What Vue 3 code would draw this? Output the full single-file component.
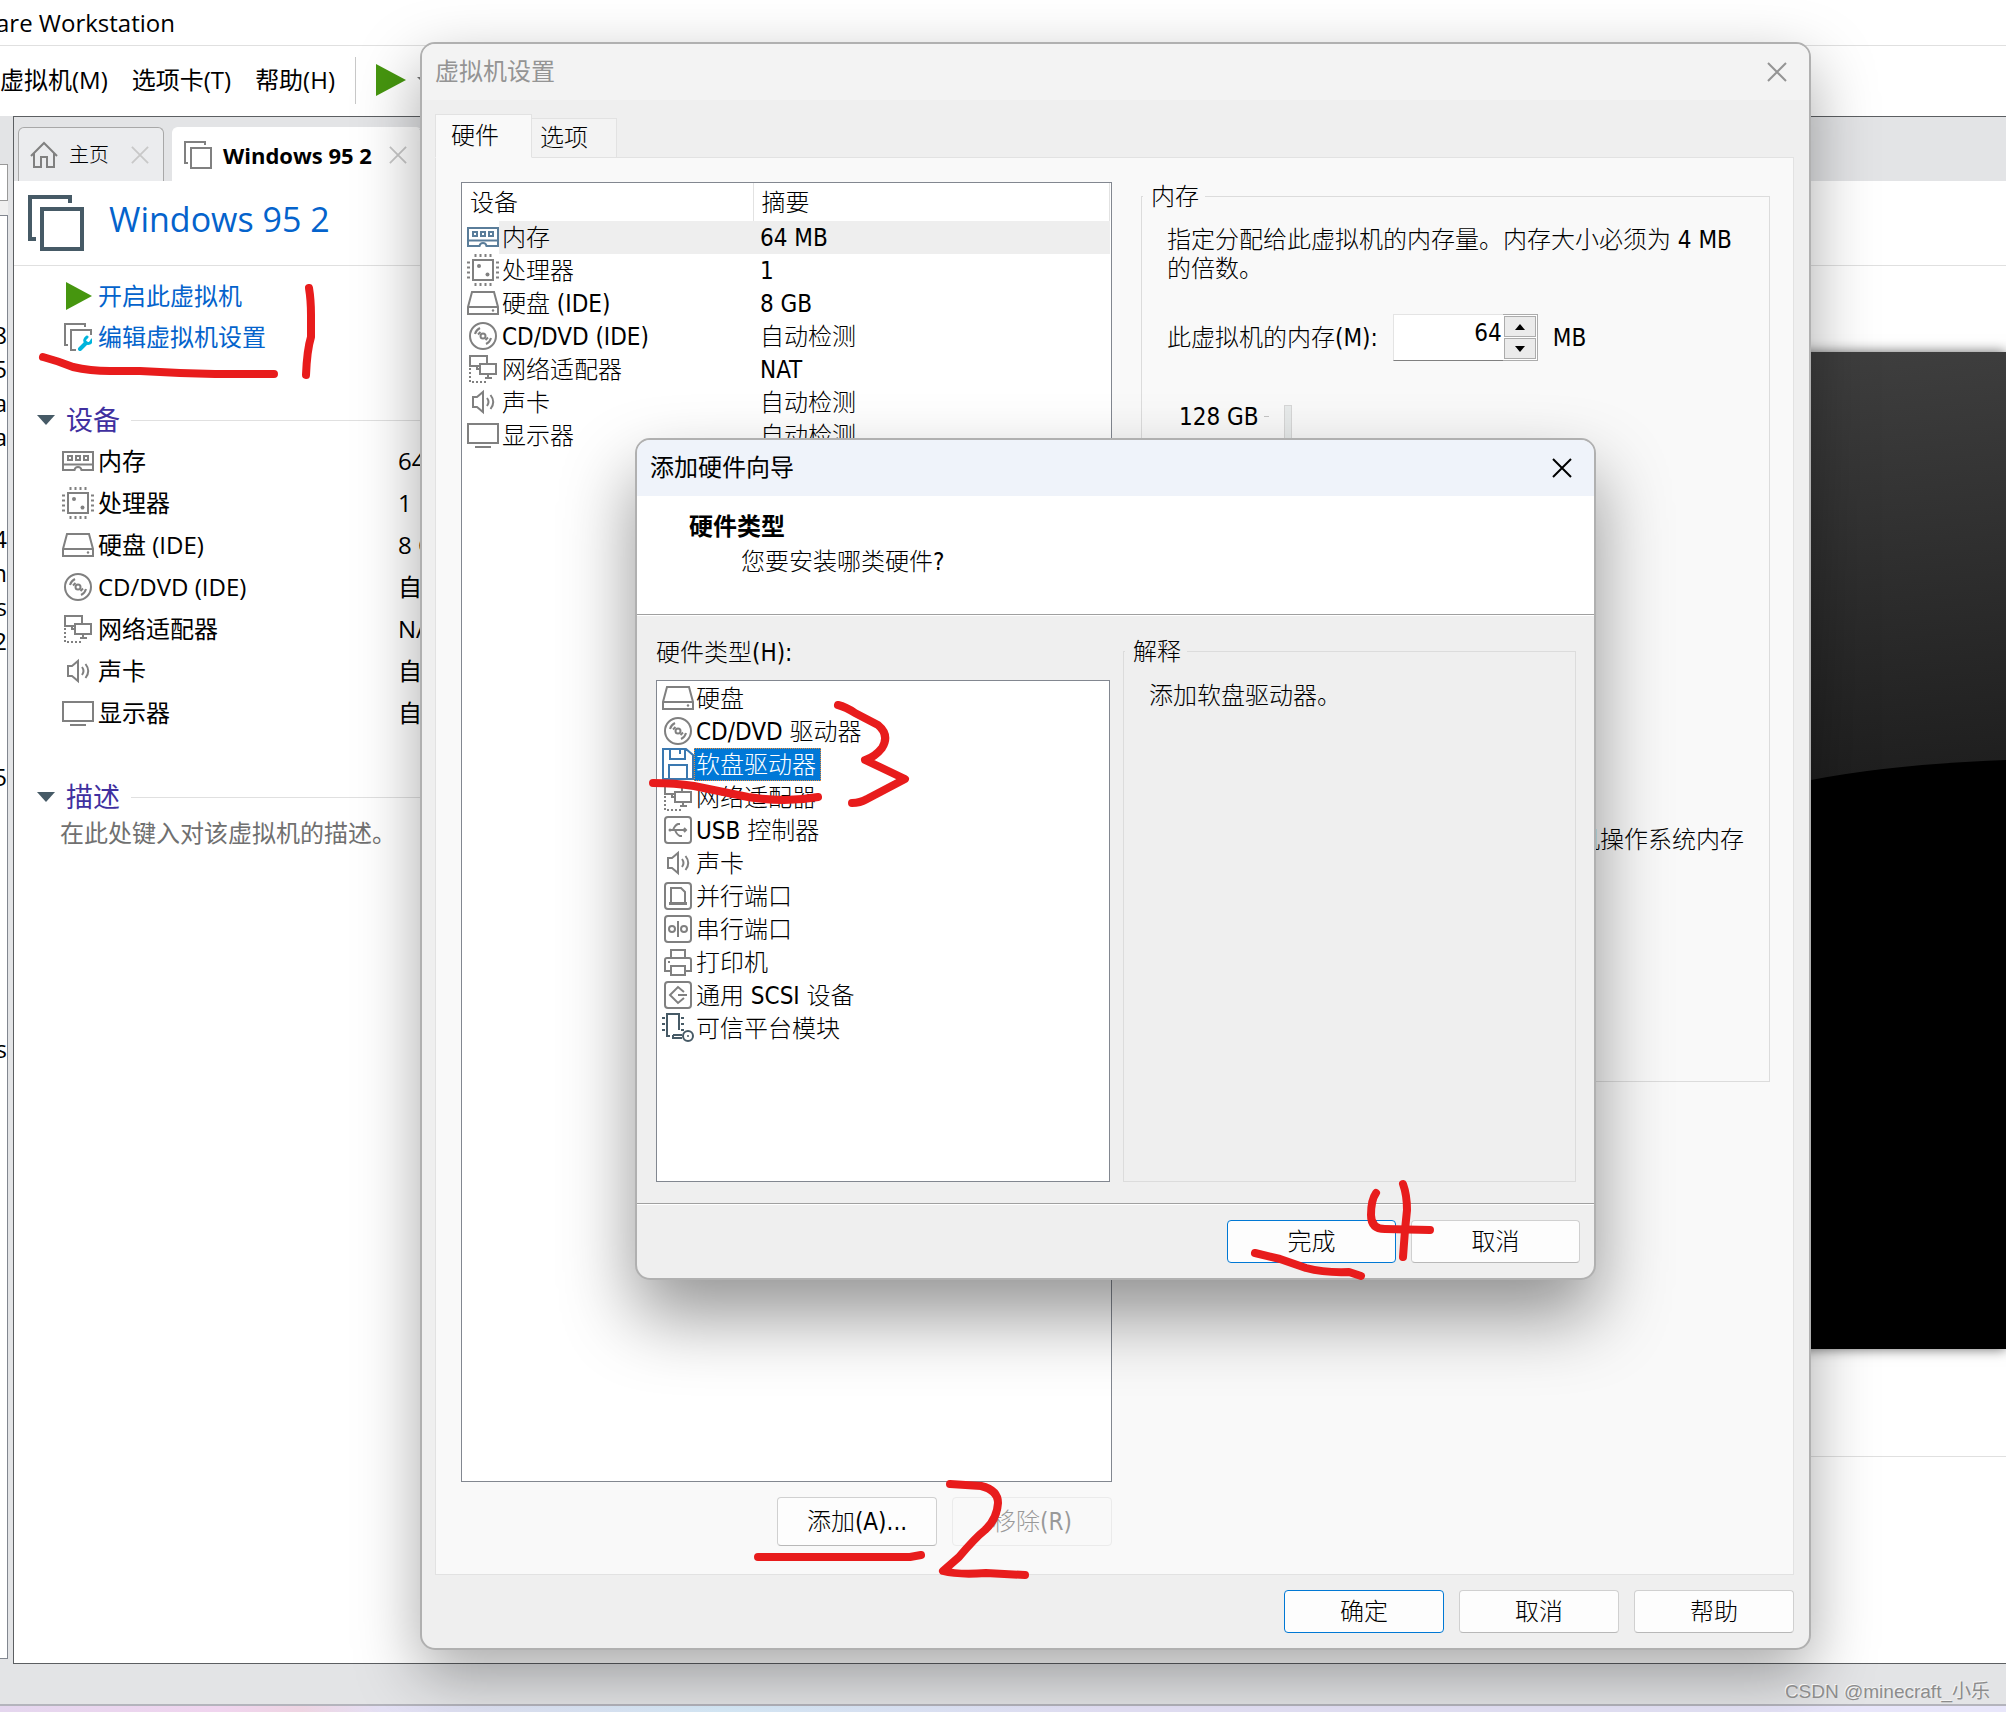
<script setup>
import { ref } from 'vue'

const memory = ref('64')
const selectedType = ref('floppy')

const devices = [
  { icon: 'mem', name: '内存', value: '64 MB' },
  { icon: 'cpu', name: '处理器', value: '1' },
  { icon: 'hdd', name: '硬盘 (IDE)', value: '8 GB' },
  { icon: 'cd', name: 'CD/DVD (IDE)', value: '自动检测' },
  { icon: 'net', name: '网络适配器', value: 'NAT' },
  { icon: 'sound', name: '声卡', value: '自动检测' },
  { icon: 'display', name: '显示器', value: '自动检测' }
]

const hardwareTypes = [
  { icon: 'hdd', name: '硬盘' },
  { icon: 'cd', name: 'CD/DVD 驱动器' },
  { icon: 'floppy', name: '软盘驱动器' },
  { icon: 'net', name: '网络适配器' },
  { icon: 'usb', name: 'USB 控制器' },
  { icon: 'sound', name: '声卡' },
  { icon: 'parallel', name: '并行端口' },
  { icon: 'serial', name: '串行端口' },
  { icon: 'printer', name: '打印机' },
  { icon: 'scsi', name: '通用 SCSI 设备' },
  { icon: 'tpm', name: '可信平台模块' }
]

const library = ['8', '5', 'a', 'a', '', '', '4', 'n', 'es', '2', '', '', '', '5', '', '', '', '', '', '', '', 'es']

const marks = [
  'M43 357Q58 361 73 367Q90 371 110 371H140L180 373L215 374H274',
  'M309 288Q311 300 311 315V337Q307 350 306 375',
  'M758 1557H910L921 1555',
  'M950 1484L981 1486Q998 1490 998 1503Q997 1519 985 1530Q975 1538 959 1557L943 1571Q958 1575 986 1573L1025 1575',
  'M653 783Q675 783 694 786L748 797Q785 803 818 797',
  'M838 705Q846 707 855 713L878 725Q890 735 882 748Q875 757 865 760L905 779L867 799Q860 803 852 803',
  'M1255 1253L1280 1259L1306 1268Q1325 1273 1349 1272L1361 1276',
  'M1376 1193Q1371 1200 1371 1215Q1371 1229 1385 1229L1430 1230',
  'M1403 1184Q1407 1195 1407 1210L1405 1230L1403 1257'
]
</script>

<template>
  <div class="desktop">
    <svg class="sprite" aria-hidden="true">
      <symbol id="i-mem" viewBox="0 0 32 32"><path d="M1 7H31V25H19.500Q19 22 16 22T12.500 25H1ZM1 19.500H31" /><path d="M6 11h4v4H6zM14 11h4v4h-4zM22 11h4v4h-4z" /></symbol>
      <symbol id="i-cpu" viewBox="0 0 32 32"><rect x="6" y="6" width="20" height="20" /><path d="M8.500 0v3M13.500 0v3M18.500 0v3M23.500 0v3M8.500 29v3M13.500 29v3M18.500 29v3M23.500 29v3M0 8.500h3M0 13.500h3M0 18.500h3M0 23.500h3M29 8.500h3M29 13.500h3M29 18.500h3M29 23.500h3" /><circle class="fill" cx="12" cy="12" r="2" /><circle class="fill" cx="20.500" cy="20.500" r="2" /></symbol>
      <symbol id="i-hdd" viewBox="0 0 32 32"><path d="M5 5H27L31 20V27H1V20ZM1 20H31" /><circle class="fill" cx="26" cy="23.500" r="1.200" /></symbol>
      <symbol id="i-cd" viewBox="0 0 32 32"><circle cx="16" cy="16" r="13" /><circle cx="16" cy="16" r="2.500" /><path d="M8 14Q9 10 13 8M11 14.500L13.500 12M24 18Q23 22 19 24M21 17.500L18.500 20" /></symbol>
      <symbol id="i-net" viewBox="0 0 32 32"><path d="M13 13H3V3H20V11M13 11H29V21H13ZM21 21V25M18 25H25M10 13V16H13" /><path d="M3 15V29H21" stroke-dasharray="2 2" /></symbol>
      <symbol id="i-sound" viewBox="0 0 32 32"><path d="M6 11V21H10L16 26V6L10 11ZM20 12Q23 16 20 20M23.500 9Q29 16 23.500 23" /></symbol>
      <symbol id="i-display" viewBox="0 0 32 32"><path d="M1 5H31V24H1ZM8 28H24" /></symbol>
      <symbol id="i-floppy" viewBox="0 0 32 32"><path d="M1 1H24L31 7V31H1ZM8 1V11H23V1M18 1V6M7 31V17H25V31" /></symbol>
      <symbol id="i-usb" viewBox="0 0 32 32"><rect x="3" y="3" width="26" height="26" rx="3" /><path d="M8 16H24M22 14L24 16L22 18M11 16Q13 11 16 10H18M13 16Q15 21 18 22H20" /><circle class="fill" cx="8" cy="16" r="1.500" /></symbol>
      <symbol id="i-parallel" viewBox="0 0 32 32"><rect x="3" y="3" width="26" height="26" rx="3" /><path d="M9 23V8H19L23 12V23" /><path class="fill" d="M7 22H25V25H7Z" /></symbol>
      <symbol id="i-serial" viewBox="0 0 32 32"><rect x="3" y="3" width="26" height="26" rx="3" /><circle cx="10" cy="16" r="3" /><circle cx="22" cy="16" r="3" /><path d="M16 8V24" /></symbol>
      <symbol id="i-printer" viewBox="0 0 32 32"><path d="M9 12V4H23V12M9 25H3V14Q3 12 5 12H27Q29 12 29 14V25H23M9 20H23V29H9ZM6 16H8" /></symbol>
      <symbol id="i-scsi" viewBox="0 0 32 32"><rect x="3" y="3" width="26" height="26" rx="3" /><path d="M22 13L16 8L8 16L16 24L22 19M16 16H25" /></symbol>
      <symbol id="i-tpm" viewBox="0 0 32 32"><path d="M8 24H5V2H17V18M0 6H3M0 12H3M0 18H3M19 6H22M19 12H22M19 18H22M11 23H20M11 23V26H20" /><circle cx="26" cy="24" r="5" /><circle class="fill" cx="26" cy="24" r="1" /></symbol>
      <symbol id="i-home" viewBox="0 0 28 28"><path d="M1 15L14 2L27 15M4 12V26H11V16H17V26H24V12" /></symbol>
      <symbol id="i-vm" viewBox="0 0 28 28"><path d="M4 22H1V1H21V4M7 7H27V27H7Z" /></symbol>
      <symbol id="i-edit" viewBox="0 0 28 28"><path d="M4 22H1V1H21V4M12 27H7V7H27V12" /><path class="wrench" d="M16 26L22 20" /><path class="wrench thin" d="M23 14Q19 17 22 20Q26 22 28 17" /></symbol>
      <symbol id="i-close" viewBox="0 0 20 20"><path d="M1 1L19 19M19 1L1 19" /></symbol>
    </svg>

    <header class="titlebar">are Workstation</header>

    <nav class="menubar">
      <button type="button">虚拟机(M)</button>
      <button type="button">选项卡(T)</button>
      <button type="button">帮助(H)</button>
      <span class="divider"></span>
      <button type="button" class="power" aria-label="开机">
        <svg width="30" height="32" viewBox="0 0 30 32"><path d="M0 0L30 16L0 32Z" fill="#46960f" /></svg>
        <svg width="12" height="6" viewBox="0 0 12 6"><path d="M0 0H12L6 6Z" fill="#777" /></svg>
      </button>
    </nav>

    <div class="workspace">
      <aside class="library">
        <div class="search"></div>
        <ul class="tree">
          <li v-for="(item, i) in library" :key="i">{{ item }}</li>
        </ul>
      </aside>

      <main class="main">
        <div class="tabstrip">
          <div class="tab home">
            <svg class="ico28"><use href="#i-home" /></svg>
            <span>主页</span>
            <svg class="tabclose"><use href="#i-close" /></svg>
          </div>
          <div class="tab active">
            <svg class="ico28"><use href="#i-vm" /></svg>
            <b>Windows 95 2</b>
            <svg class="tabclose"><use href="#i-close" /></svg>
          </div>
        </div>

        <div class="vmhead">
          <svg class="ico56"><use href="#i-vm" /></svg>
          <h1>Windows 95 2</h1>
        </div>

        <div class="vmbody">
          <div class="details">
            <div class="actions">
              <a href="#"><svg class="play" viewBox="0 0 26 28"><path d="M0 0L26 14L0 28Z" /></svg>开启此虚拟机</a>
              <a href="#"><svg class="ico28"><use href="#i-edit" /></svg>编辑虚拟机设置</a>
            </div>
            <h2><svg viewBox="0 0 18 10"><path d="M0 0H18L9 10Z" /></svg>设备</h2>
            <dl>
              <div v-for="d in devices" :key="d.icon">
                <dt><svg class="ico"><use :href="'#i-' + d.icon" /></svg>{{ d.name }}</dt>
                <dd>{{ d.value }}</dd>
              </div>
            </dl>
            <h2><svg viewBox="0 0 18 10"><path d="M0 0H18L9 10Z" /></svg>描述</h2>
            <p class="note">在此处键入对该虚拟机的描述。</p>
          </div>
          <div class="preview">
            <svg class="console" viewBox="0 0 1392 997" preserveAspectRatio="none">
              <defs>
                <linearGradient id="glare" gradientUnits="userSpaceOnUse" x1="1290" y1="0" x2="1330" y2="428"><stop offset="0" stop-color="#3e3e3e" /><stop offset="1" stop-color="#1e1e1e" /></linearGradient>
              </defs>
              <rect width="1392" height="997" fill="#000" />
              <path d="M0 0H1392V408Q1280 412 1197 428L0 700Z" fill="url(#glare)" />
            </svg>
          </div>
        </div>
      </main>
    </div>

    <footer class="statusbar"></footer>
    <div class="wallpaper"></div>

    <section class="window settings" role="dialog" aria-labelledby="settings-title">
      <div class="caption">
        <span id="settings-title">虚拟机设置</span>
        <button type="button" class="close" aria-label="关闭"><svg><use href="#i-close" /></svg></button>
      </div>
      <div class="tabs" role="tablist">
        <button type="button" role="tab" aria-selected="true" class="current">硬件</button>
        <button type="button" role="tab" aria-selected="false">选项</button>
      </div>
      <div class="page">
        <div class="hardware">
          <div class="listbox">
            <table>
              <thead>
                <tr><th>设备</th><th>摘要</th></tr>
              </thead>
              <tbody>
                <tr v-for="(d, i) in devices" :key="d.icon" :class="{ chosen: i === 0 }">
                  <td><div class="cell"><svg class="ico"><use :href="'#i-' + d.icon" /></svg><span>{{ d.name }}</span></div></td>
                  <td>{{ d.value }}</td>
                </tr>
              </tbody>
            </table>
          </div>
          <div class="listbuttons">
            <button type="button" class="btn">添加(A)...</button>
            <button type="button" class="btn" disabled>移除(R)</button>
          </div>
        </div>
        <fieldset class="memory">
          <legend>内存</legend>
          <p>指定分配给此虚拟机的内存量。内存大小必须为 4 MB 的倍数。</p>
          <div class="amount">
            <label for="mem">此虚拟机的内存(M):</label>
            <div class="spin">
              <input id="mem" v-model="memory" type="text">
              <div class="arrows">
                <button type="button" aria-label="增加"><svg viewBox="0 0 10 6"><path d="M0 6H10L5 0Z" /></svg></button>
                <button type="button" aria-label="减少"><svg viewBox="0 0 10 6"><path d="M0 0H10L5 6Z" /></svg></button>
              </div>
            </div>
            <span>MB</span>
          </div>
          <div class="scale">
            <span>128 GB</span><i class="tick"></i><i class="track"></i>
          </div>
          <p class="hint">机操作系统内存</p>
        </fieldset>
      </div>
      <div class="buttons">
        <button type="button" class="btn primary">确定</button>
        <button type="button" class="btn">取消</button>
        <button type="button" class="btn">帮助</button>
      </div>
    </section>

    <section class="window wizard" role="dialog" aria-labelledby="wizard-title">
      <div class="caption">
        <span id="wizard-title">添加硬件向导</span>
        <button type="button" class="close" aria-label="关闭"><svg><use href="#i-close" /></svg></button>
      </div>
      <div class="intro">
        <h3>硬件类型</h3>
        <p>您要安装哪类硬件?</p>
      </div>
      <div class="choose">
        <div class="types">
          <div id="types-label" class="label">硬件类型(H):</div>
          <ul role="listbox" aria-labelledby="types-label">
            <li
              v-for="t in hardwareTypes"
              :key="t.icon"
              role="option"
              :aria-selected="t.icon === selectedType"
              :class="[t.icon, { picked: t.icon === selectedType }]"
              @click="selectedType = t.icon"
            >
              <svg class="ico"><use :href="'#i-' + t.icon" /></svg><span>{{ t.name }}</span>
            </li>
          </ul>
        </div>
        <fieldset class="explain">
          <legend>解释</legend>
          <p>添加软盘驱动器。</p>
        </fieldset>
      </div>
      <div class="buttons">
        <button type="button" class="btn primary">完成</button>
        <button type="button" class="btn">取消</button>
      </div>
    </section>

    <svg class="ink" aria-hidden="true">
      <path v-for="m in marks" :key="m" :d="m" />
    </svg>
    <div class="watermark">CSDN @minecraft_小乐</div>
  </div>
</template>

<style>
body {
  margin: 0;
}
</style>

<style scoped>
.desktop {
  position: relative;
  display: flex;
  flex-direction: column;
  min-height: 100vh;
  overflow: hidden;
  background: #fff;
  color: #000;
  font-family: "Open Sans", "Noto Sans CJK SC", sans-serif;
  font-size: 24px;
  line-height: 32px;
}
.desktop *,
.desktop *::before,
.desktop *::after {
  box-sizing: border-box;
}
button,
input {
  font: inherit;
  color: inherit;
  padding: 0;
  margin: 0;
  border: 0;
  background: none;
}
ul,
dl,
dd,
p,
h1,
h2,
h3 {
  margin: 0;
  padding: 0;
  list-style: none;
}
svg {
  display: block;
  flex: none;
}
.sprite {
  position: absolute;
  width: 0;
  height: 0;
}
symbol path,
symbol rect,
symbol circle {
  fill: none;
  stroke: currentColor;
  stroke-width: 2px;
}
symbol .fill {
  fill: currentColor;
  stroke: none;
}
symbol .wrench {
  stroke: #00b4dc;
  stroke-width: 4px;
  stroke-linecap: round;
}
symbol .thin {
  stroke-width: 3px;
}
.ico {
  width: 32px;
  height: 32px;
  color: #808080;
}
.ico28 {
  width: 28px;
  height: 28px;
  color: #808080;
}

/* application frame */
.titlebar {
  height: 46px;
  padding-top: 7px;
  border-bottom: 1px solid #e0e0e0;
  white-space: nowrap;
  text-indent: -4px;
}
.menubar {
  display: flex;
  align-items: center;
  gap: 24px;
  height: 70px;
  padding-bottom: 2px;
}
.menubar button {
  white-space: nowrap;
}
.menubar .divider {
  width: 1px;
  height: 47px;
  margin: 0 -4px 0 -4px;
  background: #c8c8c8;
}
.menubar .power {
  display: flex;
  align-items: center;
  gap: 11px;
}
.workspace {
  display: flex;
  flex: 1;
  background: #e3e4e6;
}
.library {
  display: flex;
  flex-direction: column;
  width: 8px;
  margin: 48px 5px 5px 0;
  background: #f0f0f0;
}
.search {
  height: 37px;
  margin-bottom: 14px;
  border: solid #999;
  border-width: 1px 1px 1px 0;
  background: #fff;
}
.tree {
  flex: 1;
  padding-top: 103px;
  border: solid #828790;
  border-width: 1px 1px 1px 0;
  background: #fff;
}
.tree li {
  display: flex;
  justify-content: flex-end;
  height: 34px;
  overflow: hidden;
}
.main {
  display: flex;
  flex: 1;
  flex-direction: column;
  min-width: 0;
  border: solid #5c5f62;
  border-width: 1px 0 1px 1px;
  background: #fff;
}
.tabstrip {
  display: flex;
  gap: 8px;
  height: 64px;
  padding: 10px 4px 0;
  background: #e3e4e6;
}
.tab {
  display: flex;
  align-items: center;
  border: solid #a8a8a8;
  border-width: 1px 1px 0;
  border-radius: 6px 6px 0 0;
}
.tab.home {
  width: 146px;
  padding: 0 14px 0 11px;
  background: #ebecee;
  font-size: 20px;
  font-weight: 300;
}
.tab.home span {
  margin-left: 11px;
}
.tab.active {
  width: 250px;
  padding: 0 14px 0 11px;
  border-color: #fff #a8a8a8 #fff #fff;
  background: #fff;
  font-size: 22px;
}
.tab.active b {
  margin-left: 11px;
  white-space: nowrap;
}
.tabclose {
  width: 18px;
  height: 18px;
  margin-left: auto;
  color: #c8c8c8;
}
.tabclose use {
  stroke-width: 3px;
}
.vmhead {
  display: flex;
  align-items: center;
  gap: 25px;
  height: 85px;
  padding: 0 14px;
  border-bottom: 1px solid #e0e0e0;
}
.ico56 {
  width: 56px;
  height: 56px;
  color: #465a66;
}
.vmhead h1 {
  padding-bottom: 8px;
  color: #0463cc;
  font-size: 34px;
  font-weight: 400;
  line-height: 48px;
}
.vmbody {
  display: flex;
  flex: 1;
}
.details {
  width: 600px;
  padding: 10px 0 0 23px;
}
.actions {
  display: flex;
  flex-direction: column;
  gap: 1px;
  padding: 0 0 43px 27px;
}
.actions a {
  display: flex;
  align-items: center;
  gap: 6px;
  height: 40px;
  color: #0463cc;
  text-decoration: none;
}
.play {
  width: 26px;
  height: 28px;
  margin-left: 2px;
  fill: #46960f;
}
.details h2 {
  display: flex;
  align-items: center;
  gap: 11px;
  color: #4030a0;
  font-size: 27px;
  font-weight: 400;
  line-height: 40px;
}
.details h2 svg {
  width: 18px;
  height: 10px;
  fill: #465a66;
}
.details h2::after {
  content: "";
  flex: 1;
  height: 1px;
  background: #e0e0e0;
}
dl {
  padding: 0 0 43px 25px;
}
dl > div {
  display: flex;
  height: 42px;
  align-items: center;
}
dt {
  display: flex;
  align-items: center;
  gap: 4px;
  width: 336px;
}
.note {
  padding-left: 23px;
  color: #707070;
}
.preview {
  flex: 1;
  padding-top: 86px;
}
.console {
  width: 100%;
  height: 997px;
  box-shadow: 0 0 12px rgba(0, 0, 0, 0.6);
}
.preview::after {
  content: "";
  display: block;
  height: 1px;
  margin-top: 107px;
  background: #e0e0e0;
}
.statusbar {
  height: 40px;
  background: #e3e4e6;
}
.wallpaper {
  height: 8px;
  border-top: 2px solid #b4b4bc;
  background: linear-gradient(90deg, #e4d6ee, #f0d4ee 11%, #eed4e2 15%, #e4e0f4 19%, #daeefc 36%, #e8e4fa 55%, #e8e6fa);
}

/* dialog windows */
.window {
  position: absolute;
  display: flex;
  flex-direction: column;
  overflow: hidden;
  border: 2px solid #b0b0b0;
  border-radius: 15px;
  background: #efefef;
  font-family: "DejaVu Sans Condensed", "Noto Sans CJK SC", sans-serif;
  font-weight: 300;
}
.settings {
  top: 42px;
  left: 420px;
  width: 1391px;
  box-shadow: 0 24px 64px rgba(0, 0, 0, 0.34);
}
.wizard {
  top: 438px;
  left: 635px;
  width: 961px;
  box-shadow: 0 36px 72px rgba(0, 0, 0, 0.42);
}
.caption {
  display: flex;
  align-items: center;
  justify-content: space-between;
  height: 56px;
  padding: 0 22px 1px 13px;
  background: #f3f3f3;
  color: #949494;
  font-weight: 400;
}
.wizard .caption {
  background: #eff3fa;
  color: #000;
}
.close svg {
  width: 20px;
  height: 20px;
}
.tabs {
  display: flex;
  align-items: flex-end;
  height: 58px;
  margin-bottom: -1px;
  padding-left: 13px;
}
.tabs button {
  width: 85px;
  height: 40px;
  padding: 0 10px 0 8px;
  border: 1px solid #e2e2e2;
  border-left: 0;
  background: #f3f3f3;
  text-align: left;
}
.tabs .current {
  z-index: 1;
  width: 97px;
  height: 44px;
  padding-left: 15px;
  border-left: 1px solid #e2e2e2;
  border-bottom-color: #f9f9f9;
  background: #f9f9f9;
}
.page {
  display: flex;
  gap: 29px;
  margin: 0 15px 0 13px;
  padding: 24px 23px 28px 25px;
  border: 1px solid #e2e2e2;
  background: #f9f9f9;
}
.hardware {
  width: 651px;
}
.listbox {
  height: 1300px;
  padding-right: 1px;
  border: 1px solid #828790;
  background: #fff;
}
table {
  width: 100%;
  border-collapse: collapse;
  table-layout: fixed;
}
th {
  height: 38px;
  padding: 1px 0 0 8px;
  border-right: 1px solid #e2e2e2;
  font-weight: inherit;
  text-align: left;
}
th:first-child {
  width: 291px;
}
td {
  height: 33px;
  padding: 1px 0 0 7px;
}
td:first-child {
  padding: 0;
}
.cell {
  display: flex;
  height: 33px;
  padding-left: 5px;
}
.cell span {
  flex: 1;
  padding-left: 3px;
  line-height: 34px;
}
.chosen td:last-child,
.chosen .cell span {
  background: #eee;
}
.chosen .ico {
  color: #5a7d9a;
}
.listbuttons {
  display: flex;
  justify-content: flex-end;
  gap: 15px;
  padding-top: 15px;
}
.btn {
  width: 160px;
  height: 43px;
  border: 1px solid #d0d0d0;
  border-bottom-color: #b8b8b8;
  border-radius: 4px;
  background: #fdfdfd;
}
.btn.primary {
  border-color: #0078d4;
}
.listbuttons .btn {
  height: 49px;
}
.btn:disabled {
  border-color: #ebebeb;
  background: #f9f9f9;
  color: #999;
}
.buttons {
  display: flex;
  justify-content: flex-end;
  gap: 15px;
  padding: 15px;
}
fieldset {
  min-width: 0;
  margin: 0;
  border: 1px solid #dcdcdc;
}
legend {
  height: 28px;
  margin-left: 1px;
  padding: 0 6px 0 8px;
  line-height: 30px;
}
.memory {
  flex: 1;
  align-self: flex-start;
  min-height: 900px;
  padding: 16px 25px 0 0;
}
.memory > p,
.memory > div {
  margin-left: 25px;
}
.memory > p {
  line-height: 29px;
}
.amount {
  display: flex;
  align-items: center;
  gap: 15px;
  padding-top: 30px;
}
.spin {
  display: flex;
  width: 145px;
  height: 47px;
  border: 1px solid #e4e4e4;
  border-bottom-color: #808080;
  background: #fff;
}
.spin input {
  width: 108px;
  height: 36px;
  text-align: right;
}
.arrows {
  display: flex;
  flex: 1;
  flex-direction: column;
  gap: 1px;
  margin: -1px -1px -1px 1px;
  padding: 1px;
  border: 1px solid #acacac;
  border-left: 0;
}
.arrows button {
  display: flex;
  flex: 1;
  align-items: center;
  justify-content: center;
  border: 1px solid #acacac;
  background: #ebebeb;
}
.arrows svg {
  width: 10px;
  height: 6px;
}
.scale {
  display: flex;
  height: 421px;
  margin-top: 44px;
  padding-left: 12px;
  line-height: 24px;
}
.tick {
  width: 5px;
  height: 1px;
  margin: 11px 15px 0 5px;
  background: #c4c4c4;
}
.track {
  width: 8px;
  border: 1px solid #d6d6d6;
  background: #e7eaea;
}
.hint {
  text-align: right;
}
.wizard .intro {
  height: 119px;
  padding: 15px 52px;
  border-bottom: 1px solid #a0a0a0;
  background: #fff;
}
.intro h3 {
  font-size: 24px;
  font-weight: 700;
}
.intro p {
  padding: 3px 0 0 52px;
}
.choose {
  display: flex;
  gap: 13px;
  padding: 21px 18px 21px 19px;
  border-top: 1px solid #fff;
}
.types {
  width: 454px;
}
.types .label {
  padding-bottom: 11px;
}
.types ul {
  height: 502px;
  padding: 1px 5px;
  border: 1px solid #828790;
  background: #fff;
}
.types li {
  display: flex;
  height: 33px;
}
.types li span {
  padding: 0 2px;
  line-height: 34px;
}
.types .floppy .ico {
  color: #3a78b0;
}
.types .tpm .ico {
  color: #465a66;
}
.types .picked span {
  padding-right: 5px;
  outline: 1px dotted #f08a30;
  outline-offset: -1px;
  background: #0078d7;
  color: #fff;
}
.explain {
  flex: 1;
  padding: 15px 25px 0 0;
}
.explain p {
  padding-left: 25px;
}
.wizard .buttons {
  padding: 16px 14px 15px;
  border-top: 1px solid #a0a0a0;
  box-shadow: inset 0 1px #fff;
}
.wizard .btn {
  width: 169px;
}

/* handwritten step marks above the windows */
.ink {
  position: absolute;
  top: 0;
  left: 0;
  width: 100%;
  height: 100%;
  fill: none;
  stroke: #e81c1c;
  stroke-width: 8px;
  stroke-linecap: round;
  stroke-linejoin: round;
  pointer-events: none;
}
.watermark {
  position: absolute;
  right: 16px;
  bottom: 6px;
  color: #8c8c8c;
  font-family: "Liberation Sans", "Noto Sans CJK SC", sans-serif;
  font-size: 19px;
  line-height: 28px;
  text-shadow: -1px -1px #f4f4f4;
}
</style>
